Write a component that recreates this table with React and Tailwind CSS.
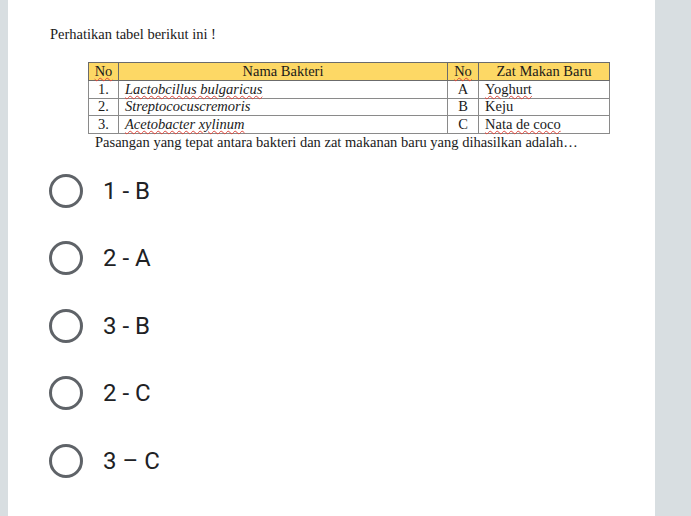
import React from 'react'

const rows = [
  { no: '1.', bakteri: 'Lactobcillus bulgaricus', wavy: true, kode: 'A', zat: 'Yoghurt', zatWavy: true },
  { no: '2.', bakteri: 'Streptococuscremoris', wavy: false, kode: 'B', zat: 'Keju', zatWavy: false },
  { no: '3.', bakteri: 'Acetobacter xylinum', wavy: true, kode: 'C', zat: 'Nata de coco', zatWavy: true },
]

const options = ['1 - B', '2 - A', '3 - B', '2 - C', '3 – C']

const wavy = 'underline decoration-wavy decoration-[#e0453a] decoration-[1px] underline-offset-[1px]'

export default function App() {
  return (
    <div className="flex h-[516px] w-[691px] overflow-hidden">
      <div className="w-[8px] bg-[#d8dee1]" />
      <div className="flex-1 bg-white">
        <div className="pl-[42px] pt-[26px] text-[14.5px] leading-[17px] text-[#1a1a1a] font-['Liberation_Serif',serif]">
          Perhatikan tabel berikut ini !
        </div>

        <table className="ml-[80px] mt-[19px] border-collapse text-[14.5px] leading-[15px] text-[#1a1a1a] font-['Liberation_Serif',serif]">
          <thead>
            <tr className="h-[18px] bg-[#fdd865]">
              <th className="w-[30px] border border-[#6b6b6b] font-normal">
                <span className={wavy}>No</span>
              </th>
              <th className="w-[329px] border border-[#6b6b6b] font-normal">Nama Bakteri</th>
              <th className="w-[31px] border border-[#6b6b6b] font-normal">
                <span className={wavy}>No</span>
              </th>
              <th className="w-[131px] border border-[#6b6b6b] font-normal">Zat Makan Baru</th>
            </tr>
          </thead>
          <tbody>
            {rows.map((r) => (
              <tr key={r.no} className="h-[17.5px]">
                <td className="border border-[#8a8a8a] text-center">{r.no}</td>
                <td className="border border-[#8a8a8a] pl-[6px] italic">
                  <span className={r.wavy ? wavy : ''}>{r.bakteri}</span>
                </td>
                <td className="border border-[#8a8a8a] text-center">{r.kode}</td>
                <td className="border border-[#8a8a8a] pl-[6px]">
                  <span className={r.zatWavy ? wavy : ''}>{r.zat}</span>
                </td>
              </tr>
            ))}
          </tbody>
        </table>

        <div className="pl-[87px] text-[14.5px] leading-[16px] text-[#1a1a1a] font-['Liberation_Serif',serif]">
          Pasangan yang tepat antara bakteri dan zat makanan baru yang dihasilkan adalah…
        </div>

        <div className="mt-[24px] flex flex-col gap-[33.5px] pl-[41px]">
          {options.map((o) => (
            <div key={o} className="flex h-[34px] items-center">
              <div className="h-[34px] w-[34px] shrink-0 rounded-full border-[3px] border-[#5f6368]" />
              <span className="ml-[20px] text-[24px] leading-[28px] text-[#202124] font-['Roboto',sans-serif]">{o}</span>
            </div>
          ))}
        </div>
      </div>
      <div className="w-[36px] bg-[#d8dee1]" />
    </div>
  )
}
